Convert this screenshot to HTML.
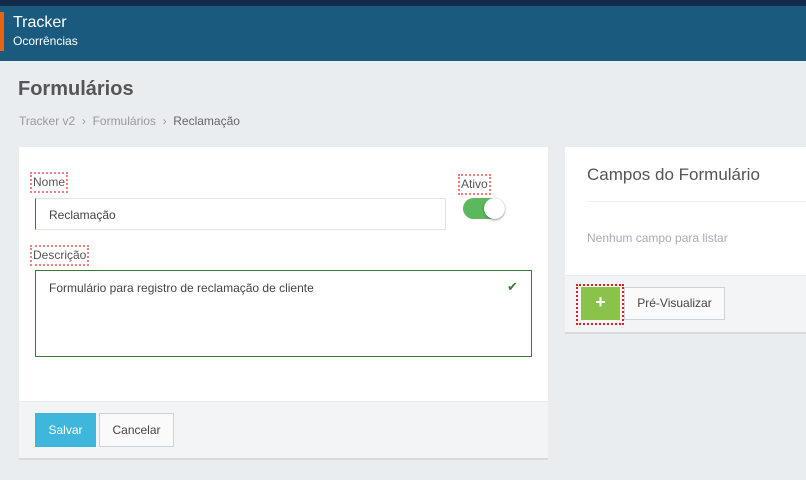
<!DOCTYPE html>
<html><head><meta charset="utf-8"><style>
*{box-sizing:border-box;margin:0;padding:0}
body{width:806px;height:480px;overflow:hidden;background:#e9edf0;font-family:"Liberation Sans",sans-serif;position:relative}
.abs{position:absolute}
.top{left:0;top:0;width:806px;height:6px;background:#152a4a}
.hdr{left:0;top:6px;width:806px;height:55px;background:#1b5a7f}
.bar{left:0;top:12px;width:4px;height:39px;background:#e8650f}
.card{background:#fff;box-shadow:0 2px 0 #d6d9dd}
.lbl{font-size:12px;color:#555;outline:2px dotted #f08080;outline-offset:-2px;padding:3px 3px;line-height:15px}
.btn{font-size:12px;text-align:center}
</style></head><body>
<div class="abs top"></div>
<div class="abs hdr"></div>
<div class="abs bar"></div>
<div class="abs" style="left:13px;top:14px;color:#fff;font-size:16px">Tracker</div>
<div class="abs" style="left:13px;top:34px;color:#fff;font-size:12px">Ocorrências</div>
<div class="abs" style="left:18px;top:78px;color:#555;font-size:20px;font-weight:bold">Formulários</div>
<div class="abs" style="left:19px;top:114px;font-size:12px;color:#999">Tracker v2 &nbsp;›&nbsp; Formulários &nbsp;›&nbsp; <span style="color:#666">Reclamação</span></div>

<div class="abs card" style="left:19px;top:147px;width:529px;height:311px"></div>
<div class="abs" style="left:19px;top:401px;width:529px;height:57px;background:#f3f4f6;border-top:1px solid #e8eaed"></div>
<div class="abs lbl" style="left:30px;top:172px">Nome</div>
<div class="abs lbl" style="left:458px;top:174px">Ativo</div>
<div class="abs" style="left:35px;top:198px;width:411px;height:32px;border:1px solid #e3e3e3;border-left:1px solid #a04040;font-size:12px;color:#444;padding:9px 0 0 13px">Reclamação</div>
<div class="abs" style="left:463px;top:198px;width:42px;height:21px;border-radius:11px;background:#5cb85c"></div>
<div class="abs" style="left:484px;top:198px;width:21px;height:21px;border-radius:50%;background:#fff;box-shadow:0 1px 2px rgba(0,0,0,.4)"></div>
<div class="abs lbl" style="left:30px;top:245px">Descrição</div>
<div class="abs" style="left:35px;top:270px;width:497px;height:87px;border:1px solid #3c763d;font-size:12px;color:#444;padding:10px 0 0 13px">Formulário para registro de reclamação de cliente</div>
<div class="abs" style="left:507px;top:279px;color:#3c763d;font-size:13px">✔</div>
<div class="abs btn" style="left:35px;top:413px;width:61px;height:34px;line-height:34px;background:#3fb7dc;color:#fff">Salvar</div>
<div class="abs btn" style="left:99px;top:413px;width:75px;height:34px;line-height:32px;background:#fafafa;border:1px solid #ccd3dc;color:#444">Cancelar</div>

<div class="abs card" style="left:565px;top:147px;width:241px;height:185px"></div>
<div class="abs" style="left:587px;top:165px;font-size:17px;color:#555">Campos do Formulário</div>
<div class="abs" style="left:587px;top:201px;width:219px;height:1px;background:#eee"></div>
<div class="abs" style="left:587px;top:231px;font-size:12px;color:#aab">Nenhum campo para listar</div>
<div class="abs" style="left:565px;top:275px;width:241px;height:57px;background:#f3f4f6;border-top:1px solid #e8eaed"></div>
<div class="abs" style="left:576px;top:284px;width:48px;height:41px;outline:2px dotted #e02020;outline-offset:-2px"></div>
<div class="abs btn" style="left:581px;top:287px;width:39px;height:33px;line-height:31px;background:#8bc34a;color:#fff;font-weight:bold;font-size:18px">+</div>
<div class="abs btn" style="left:624px;top:287px;width:101px;height:33px;line-height:31px;background:#fafafa;border:1px solid #ccd3dc;color:#444">Pré-Visualizar</div>
</body></html>
